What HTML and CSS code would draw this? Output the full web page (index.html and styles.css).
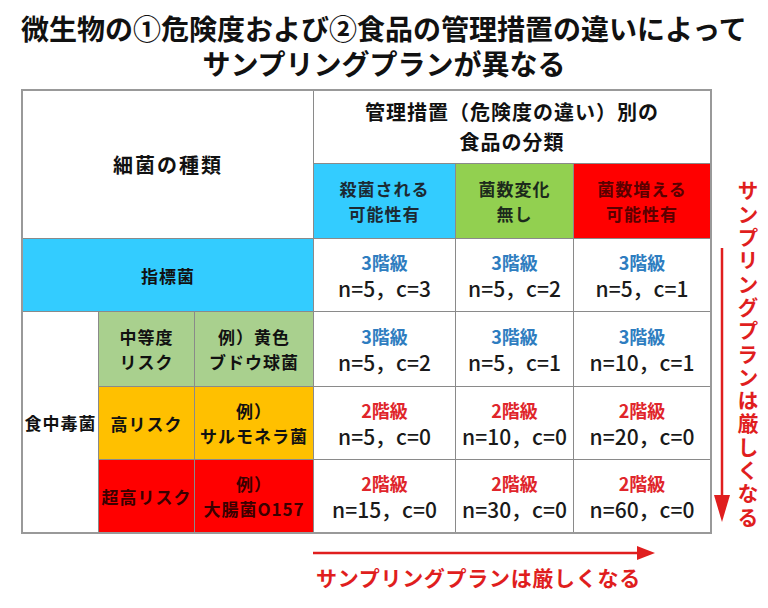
FILE: index.html
```html
<!DOCTYPE html>
<html lang="ja">
<head>
<meta charset="utf-8">
<link rel="stylesheet" href="styles.css">
</head>
<body>
<div class="page">
  <h1 class="title"><span class="tline">微生物の①危険度および②食品の管理措置の違いによって</span><span class="tline">サンプリングプランが異なる</span></h1>
  <div class="main">
    <div class="table">
      <div class="cell head-main">細菌の種類</div>
      <div class="cell head-top">管理措置（危険度の違い）別の<br>食品の分類</div>
      <div class="cell h-blue">殺菌される<br>可能性有</div>
      <div class="cell h-green">菌数変化<br>無し</div>
      <div class="cell h-red">菌数増える<br>可能性有</div>

      <div class="cell indicator">指標菌</div>
      <div class="cell data"><span class="grade g3">3階級</span><span class="plan">n=5，c=3</span></div>
      <div class="cell data"><span class="grade g3">3階級</span><span class="plan">n=5，c=2</span></div>
      <div class="cell data"><span class="grade g3">3階級</span><span class="plan">n=5，c=1</span></div>

      <div class="cell poison">食中毒菌</div>
      <div class="cell lgreen">中等度<br>リスク</div>
      <div class="cell lgreen">例）黄色<br>ブドウ球菌</div>
      <div class="cell data"><span class="grade g3">3階級</span><span class="plan">n=5，c=2</span></div>
      <div class="cell data"><span class="grade g3">3階級</span><span class="plan">n=5，c=1</span></div>
      <div class="cell data"><span class="grade g3">3階級</span><span class="plan">n=10，c=1</span></div>

      <div class="cell orange">高リスク</div>
      <div class="cell orange">例）<br>サルモネラ菌</div>
      <div class="cell data"><span class="grade g2">2階級</span><span class="plan">n=5，c=0</span></div>
      <div class="cell data"><span class="grade g2">2階級</span><span class="plan">n=10，c=0</span></div>
      <div class="cell data"><span class="grade g2">2階級</span><span class="plan">n=20，c=0</span></div>

      <div class="cell red">超高リスク</div>
      <div class="cell red">例）<br>大腸菌O157</div>
      <div class="cell data"><span class="grade g2">2階級</span><span class="plan">n=15，c=0</span></div>
      <div class="cell data"><span class="grade g2">2階級</span><span class="plan">n=30，c=0</span></div>
      <div class="cell data"><span class="grade g2">2階級</span><span class="plan">n=60，c=0</span></div>
    </div>
    <div class="vside">
      <svg class="varrow" width="20" height="274" viewBox="0 0 20 274">
        <line x1="10" y1="0" x2="10" y2="250" stroke="#e01e1e" stroke-width="2.5"/>
        <polygon points="2,247 18,247 10,274" fill="#e01e1e"/>
      </svg>
      <div class="vtext">サンプリングプランは厳しくなる</div>
    </div>
  </div>
  <div class="bottom">
    <svg class="harrow" width="342" height="20" viewBox="0 0 342 20">
      <line x1="0" y1="10" x2="328" y2="10" stroke="#e01e1e" stroke-width="2.5"/>
      <polygon points="324,3 342,10 324,17" fill="#e01e1e"/>
    </svg>
    <div class="htext">サンプリングプランは厳しくなる</div>
  </div>
</div>
</body>
</html>
```
FILE: styles.css
```css
html, body {
  margin: 0;
  padding: 0;
  background: #ffffff;
}
body {
  font-family: "Noto Sans CJK JP", "Noto Sans", sans-serif;
  color: #111;
}
.page {
  width: 768px;
  height: 608px;
  overflow: hidden;
}
.title {
  margin: 0;
  padding-top: 11px;
  font-size: 28px;
  font-weight: 700;
  text-align: center;
}
.tline {
  display: block;
  height: 35px;
  line-height: 35px;
}
.main {
  display: flex;
  margin-top: 8px;
  margin-left: 21px;
}
.table {
  box-sizing: border-box;
  width: 691px;
  display: grid;
  grid-template-columns: 75px 95px 118px 141px 117px 136px;
  grid-template-rows: 72px 74px 72px 74px 72px 72px;
  gap: 1px;
  background: #8a8a8a;
  border: 2px solid #999;
}
.cell {
  display: flex;
  flex-direction: column;
  align-items: center;
  justify-content: center;
  text-align: center;
  background: #fff;
  font-weight: 700;
  font-size: 17px;
  line-height: 25px;
}
.head-main {
  grid-column: 1 / 4;
  grid-row: 1 / 3;
  font-size: 20px;
  letter-spacing: 2px;
}
.head-top {
  grid-column: 4 / 7;
  grid-row: 1;
  font-size: 20px;
  line-height: 30px;
  letter-spacing: 1px;
}
.h-blue { background: #33ccff; color: #1c2a33; letter-spacing: 1px; }
.h-green { background: #92d050; color: #1c2a1c; letter-spacing: 1px; }
.h-red { background: #ff0000; color: #5a0000; letter-spacing: 1px; }
.indicator {
  grid-column: 1 / 4;
  background: #33ccff;
  letter-spacing: 1px;
}
.poison {
  grid-column: 1;
  grid-row: 4 / 7;
  letter-spacing: 1px;
}
.lgreen { background: #a9d08e; letter-spacing: 1px; }
.orange { background: #ffc000; letter-spacing: 1px; }
.red { background: #ff0000; color: #3a0000; letter-spacing: 1px; }
.data {
  line-height: 26px;
}
.grade {
  font-size: 18px;
  font-weight: 700;
}
.g3 { color: #2e7dc0; }
.g2 { color: #e0252b; }
.plan {
  font-size: 21px;
  font-weight: 500;
  color: #1a1a1a;
}
.vside {
  display: flex;
}
.varrow {
  display: block;
  margin-top: 159px;
}
.vtext {
  writing-mode: vertical-rl;
  margin-top: 91px;
  margin-left: 5px;
  font-size: 21px;
  line-height: 22px;
  letter-spacing: 2.3px;
  font-weight: 700;
  color: #e01e1e;
}
.bottom {
  margin-left: 313px;
  margin-top: 9px;
}
.harrow {
  display: block;
}
.htext {
  margin-left: 3px;
  font-size: 21px;
  line-height: 28px;
  letter-spacing: 0.7px;
  font-weight: 700;
  color: #e01e1e;
}
```
